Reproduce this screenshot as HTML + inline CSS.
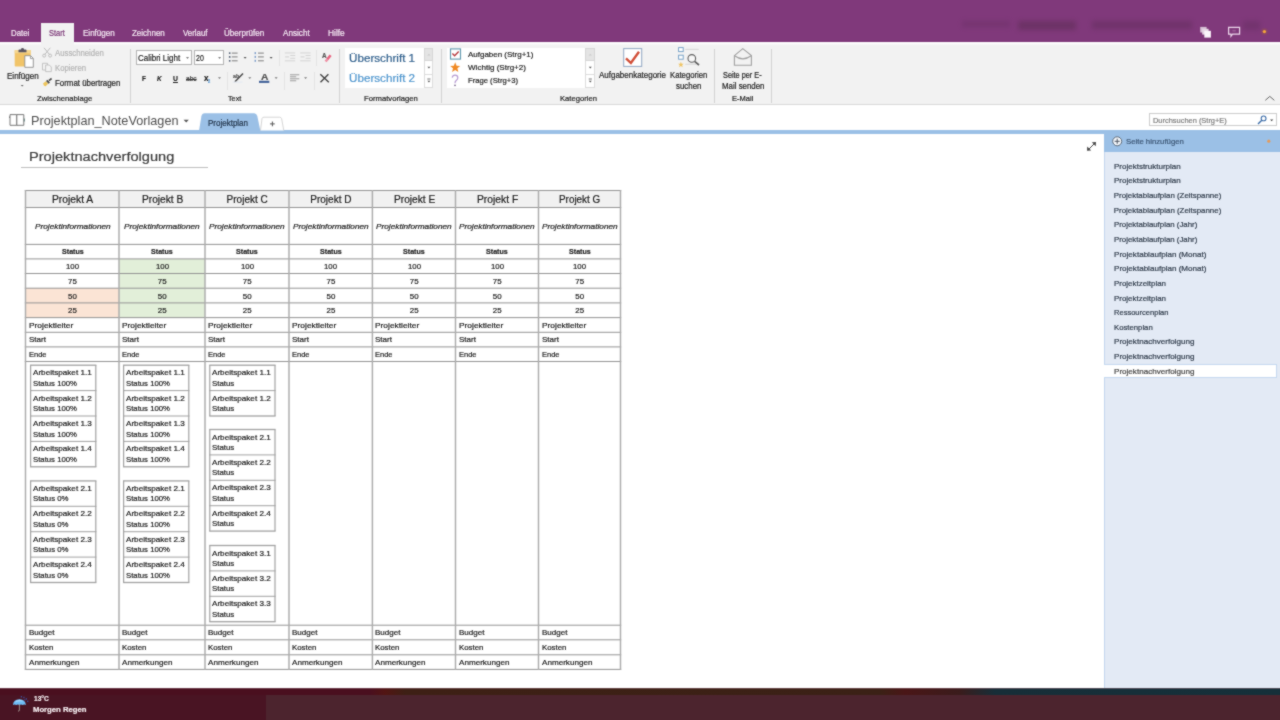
<!DOCTYPE html>
<html lang="de"><head><meta charset="utf-8"><title>OneNote - Projektnachverfolgung</title>
<style>
html,body{margin:0;padding:0;}
body{width:1280px;height:720px;overflow:hidden;position:relative;background:#fff;font-family:"Liberation Sans",sans-serif;}
.a{position:absolute;}
.t{-webkit-text-stroke:0.2px currentColor;position:absolute;white-space:nowrap;line-height:1;transform-origin:0 50%;font-family:"Liberation Sans",sans-serif;}
svg{position:absolute;overflow:visible;}
#pg{position:absolute;left:0;top:0;width:1280px;height:720px;overflow:hidden;will-change:transform;background:#fff;filter:url(#soft);}

</style></head>
<body>
<svg width="0" height="0" style="position:absolute"><defs><filter id="soft" x="0" y="0" width="100%" height="100%" color-interpolation-filters="sRGB"><feConvolveMatrix order="3" kernelMatrix="1 2 1 2 14 2 1 2 1" divisor="26" edgeMode="duplicate" preserveAlpha="true"/></filter></defs></svg>
<div id="pg">
<div class="a" style="left:0.00px;top:0.00px;width:1280.00px;height:42.00px;background:#80397B;"></div>
<div class="a" style="left:962.00px;top:21.00px;width:48.00px;height:6.00px;background:#6E3169;filter:blur(2.5px);opacity:.6;"></div>
<div class="a" style="left:1018.00px;top:21.00px;width:58.00px;height:9.00px;background:#66305F;filter:blur(2.5px);opacity:.75;"></div>
<div class="a" style="left:1092.00px;top:21.00px;width:100.00px;height:8.00px;background:#6A3064;filter:blur(2.5px);opacity:.7;"></div>
<div class="a" style="left:1243.00px;top:21.00px;width:17.00px;height:9.00px;background:#6E3169;filter:blur(2.5px);opacity:.7;"></div>
<div class="a" style="left:40.50px;top:22.50px;width:33.00px;height:20.50px;background:#F2F2F2;"></div>
<div class="a" style="left:0.00px;top:42.00px;width:1280.00px;height:62.50px;background:#F2F2F2;"></div>
<div class="a" style="left:0.00px;top:42.00px;width:1280.00px;height:3.20px;background:linear-gradient(180deg,#FCF9FC 0,#FCFBFC 65%,#F2F2F2 100%);"></div>
<div class="a" style="left:0.00px;top:104.00px;width:1280.00px;height:1.00px;background:#DADADA;"></div>
<div class="a" style="left:40.50px;top:41.00px;width:33.00px;height:4.00px;background:#F2F2F2;"></div>
<div class="a" style="left:130.30px;top:49.00px;width:1.20px;height:54.00px;background:#D2D2D2;"></div>
<div class="a" style="left:338.50px;top:49.00px;width:1.20px;height:54.00px;background:#D2D2D2;"></div>
<div class="a" style="left:440.80px;top:49.00px;width:1.20px;height:54.00px;background:#D2D2D2;"></div>
<div class="a" style="left:714.10px;top:49.00px;width:1.20px;height:54.00px;background:#D2D2D2;"></div>
<div class="a" style="left:770.50px;top:49.00px;width:1.20px;height:54.00px;background:#D2D2D2;"></div>
<div class="a" style="left:278.60px;top:50.00px;width:0.90px;height:16.00px;background:#E4E4E4;"></div>
<div class="a" style="left:315.60px;top:50.00px;width:0.90px;height:16.00px;background:#E4E4E4;"></div>
<div class="a" style="left:226.60px;top:71.50px;width:0.90px;height:18.00px;background:#E4E4E4;"></div>
<div class="a" style="left:283.60px;top:71.50px;width:0.90px;height:18.00px;background:#E4E4E4;"></div>
<div class="a" style="left:313.60px;top:71.50px;width:0.90px;height:18.00px;background:#E4E4E4;"></div>
<div class="a" style="left:136.30px;top:50.00px;width:55.90px;height:15.30px;background:#fff;box-sizing:border-box;border:1px solid #B4B4B4;"></div>
<div class="a" style="left:194.30px;top:50.00px;width:29.90px;height:15.30px;background:#fff;box-sizing:border-box;border:1px solid #B4B4B4;"></div>
<div class="a" style="left:345.30px;top:47.90px;width:88.10px;height:39.80px;background:#fff;"></div>
<div class="a" style="left:424.40px;top:47.90px;width:9.00px;height:39.80px;background:#fff;box-sizing:border-box;border:1px solid #DCDCDC;"></div>
<div class="a" style="left:424.40px;top:47.90px;width:9.00px;height:13.20px;background:#E4E4E4;box-sizing:border-box;border:1px solid #D6D6D6;"></div>
<div class="a" style="left:424.40px;top:73.70px;width:9.00px;height:1.00px;background:#DCDCDC;"></div>
<div class="a" style="left:447.40px;top:47.90px;width:148.00px;height:39.80px;background:#fff;"></div>
<div class="a" style="left:585.30px;top:47.90px;width:10.00px;height:39.80px;background:#fff;box-sizing:border-box;border:1px solid #DCDCDC;"></div>
<div class="a" style="left:585.30px;top:47.90px;width:10.00px;height:13.20px;background:#E4E4E4;box-sizing:border-box;border:1px solid #D6D6D6;"></div>
<div class="a" style="left:585.30px;top:73.70px;width:10.00px;height:1.00px;background:#DCDCDC;"></div>
<div class="a" style="left:0.00px;top:130.00px;width:1280.00px;height:3.80px;background:#9BC0E6;"></div>
<svg style="left:197px;top:112px" width="70" height="20" viewBox="0 0 70 20"><path d="M2 19 L4.4 4.2 Q5 1.3 7.6 1.3 L57 1.3 Q59.6 1.3 60.3 4 L63.4 19 Z" fill="#9BC0E6"/></svg>
<svg style="left:257px;top:115px" width="30" height="16" viewBox="0 0 30 16"><path d="M3.5 15.5 L5 3.6 Q5.3 2.2 7 2.2 L22.5 2.2 Q24.2 2.2 24.6 3.6 L26.8 15.5" fill="#fff" stroke="#D0D0D0" stroke-width="0.9"/><path d="M13 8.9 H17.8 M15.4 6.5 V11.3" stroke="#555" stroke-width="1" fill="none"/></svg>
<div class="a" style="left:1149.20px;top:113.30px;width:128.30px;height:13.00px;background:#fff;box-sizing:border-box;border:1px solid #CDCDCD;"></div>
<div class="a" style="left:21.00px;top:166.60px;width:187.00px;height:1.00px;background:#BEBEBE;"></div>
<div class="a" style="left:1104.00px;top:133.80px;width:176.00px;height:554.20px;background:#E3EAF5;"></div>
<div class="a" style="left:1104.00px;top:133.80px;width:1.00px;height:554.20px;background:#C3D6EE;"></div>
<div class="a" style="left:1104.00px;top:133.80px;width:176.00px;height:18.20px;background:#9BC0E6;"></div>
<div class="a" style="left:1104.20px;top:364.20px;width:173.00px;height:14.20px;background:#fff;box-sizing:border-box;border:1px solid #C5D9F0;border-left:none;"></div>
<div class="a" style="left:0.00px;top:688.00px;width:1280.00px;height:32.00px;background:#491423;"></div>
<div class="a" style="left:266.00px;top:694.50px;width:1014.00px;height:25.50px;background:#4C242E;"></div>
<div class="a" style="left:0.00px;top:688.00px;width:1280.00px;height:6.50px;border-top:1px solid rgba(150,110,125,.45);box-sizing:border-box;background:linear-gradient(90deg,#4A0F1F 0px,#4A0F1F 370px,#521513 385px,#3E2015 405px,#3B2116 880px,#4A1617 905px,#3A1C1C 960px,#172E38 995px,#15303A 1280px);"></div>
<div class="a" style="left:25.50px;top:190.50px;width:595.00px;height:17.00px;background:#F1F1F1;"></div>
<div class="a" style="left:25.50px;top:288.20px;width:93.50px;height:29.40px;background:#FBE4D5;"></div>
<div class="a" style="left:119.00px;top:258.90px;width:86.00px;height:58.70px;background:#E2EFD9;"></div>
<svg style="left:0;top:0" width="1280" height="720" viewBox="0 0 1280 720">
<rect x="24.80" y="190.00" width="596.40" height="1.00" fill="#949494"/>
<rect x="24.80" y="207.00" width="596.40" height="1.00" fill="#949494"/>
<rect x="24.80" y="243.90" width="596.40" height="1.00" fill="#949494"/>
<rect x="24.80" y="258.40" width="596.40" height="1.00" fill="#949494"/>
<rect x="24.80" y="273.00" width="596.40" height="1.00" fill="#949494"/>
<rect x="24.80" y="287.70" width="596.40" height="1.00" fill="#949494"/>
<rect x="24.80" y="302.40" width="596.40" height="1.00" fill="#949494"/>
<rect x="24.80" y="317.10" width="596.40" height="1.00" fill="#949494"/>
<rect x="24.80" y="331.80" width="596.40" height="1.00" fill="#949494"/>
<rect x="24.80" y="346.40" width="596.40" height="1.00" fill="#949494"/>
<rect x="24.80" y="361.00" width="596.40" height="1.00" fill="#949494"/>
<rect x="24.80" y="624.70" width="596.40" height="1.00" fill="#949494"/>
<rect x="24.80" y="639.30" width="596.40" height="1.00" fill="#949494"/>
<rect x="24.80" y="654.30" width="596.40" height="1.00" fill="#949494"/>
<rect x="24.80" y="668.90" width="596.40" height="1.00" fill="#949494"/>
<rect x="24.77" y="190.00" width="1.45" height="479.90" fill="#ABABAB"/>
<rect x="118.28" y="190.00" width="1.45" height="479.90" fill="#ABABAB"/>
<rect x="204.28" y="190.00" width="1.45" height="479.90" fill="#ABABAB"/>
<rect x="288.27" y="190.00" width="1.45" height="479.90" fill="#ABABAB"/>
<rect x="371.67" y="190.00" width="1.45" height="479.90" fill="#ABABAB"/>
<rect x="454.77" y="190.00" width="1.45" height="479.90" fill="#ABABAB"/>
<rect x="537.77" y="190.00" width="1.45" height="479.90" fill="#ABABAB"/>
<rect x="619.77" y="190.00" width="1.45" height="479.90" fill="#ABABAB"/>
<rect x="30.00" y="364.55" width="66.40" height="1.30" fill="#A2A2A2"/>
<rect x="30.00" y="390.10" width="66.40" height="1.00" fill="#A2A2A2"/>
<rect x="30.00" y="415.50" width="66.40" height="1.00" fill="#A2A2A2"/>
<rect x="30.00" y="440.90" width="66.40" height="1.00" fill="#A2A2A2"/>
<rect x="30.00" y="466.15" width="66.40" height="1.30" fill="#A2A2A2"/>
<rect x="30.00" y="365.20" width="1.20" height="101.60" fill="#A2A2A2"/>
<rect x="95.20" y="365.20" width="1.20" height="101.60" fill="#A2A2A2"/>
<rect x="30.00" y="480.25" width="66.40" height="1.30" fill="#A2A2A2"/>
<rect x="30.00" y="505.80" width="66.40" height="1.00" fill="#A2A2A2"/>
<rect x="30.00" y="531.20" width="66.40" height="1.00" fill="#A2A2A2"/>
<rect x="30.00" y="556.60" width="66.40" height="1.00" fill="#A2A2A2"/>
<rect x="30.00" y="581.85" width="66.40" height="1.30" fill="#A2A2A2"/>
<rect x="30.00" y="480.90" width="1.20" height="101.60" fill="#A2A2A2"/>
<rect x="95.20" y="480.90" width="1.20" height="101.60" fill="#A2A2A2"/>
<rect x="123.00" y="364.55" width="66.40" height="1.30" fill="#A2A2A2"/>
<rect x="123.00" y="390.10" width="66.40" height="1.00" fill="#A2A2A2"/>
<rect x="123.00" y="415.50" width="66.40" height="1.00" fill="#A2A2A2"/>
<rect x="123.00" y="440.90" width="66.40" height="1.00" fill="#A2A2A2"/>
<rect x="123.00" y="466.15" width="66.40" height="1.30" fill="#A2A2A2"/>
<rect x="123.00" y="365.20" width="1.20" height="101.60" fill="#A2A2A2"/>
<rect x="188.20" y="365.20" width="1.20" height="101.60" fill="#A2A2A2"/>
<rect x="123.00" y="480.25" width="66.40" height="1.30" fill="#A2A2A2"/>
<rect x="123.00" y="505.80" width="66.40" height="1.00" fill="#A2A2A2"/>
<rect x="123.00" y="531.20" width="66.40" height="1.00" fill="#A2A2A2"/>
<rect x="123.00" y="556.60" width="66.40" height="1.00" fill="#A2A2A2"/>
<rect x="123.00" y="581.85" width="66.40" height="1.30" fill="#A2A2A2"/>
<rect x="123.00" y="480.90" width="1.20" height="101.60" fill="#A2A2A2"/>
<rect x="188.20" y="480.90" width="1.20" height="101.60" fill="#A2A2A2"/>
<rect x="209.20" y="364.55" width="66.40" height="1.30" fill="#A2A2A2"/>
<rect x="209.20" y="390.10" width="66.40" height="1.00" fill="#A2A2A2"/>
<rect x="209.20" y="415.35" width="66.40" height="1.30" fill="#A2A2A2"/>
<rect x="209.20" y="365.20" width="1.20" height="50.80" fill="#A2A2A2"/>
<rect x="274.40" y="365.20" width="1.20" height="50.80" fill="#A2A2A2"/>
<rect x="209.20" y="428.85" width="66.40" height="1.30" fill="#A2A2A2"/>
<rect x="209.20" y="454.40" width="66.40" height="1.00" fill="#A2A2A2"/>
<rect x="209.20" y="479.80" width="66.40" height="1.00" fill="#A2A2A2"/>
<rect x="209.20" y="505.20" width="66.40" height="1.00" fill="#A2A2A2"/>
<rect x="209.20" y="530.45" width="66.40" height="1.30" fill="#A2A2A2"/>
<rect x="209.20" y="429.50" width="1.20" height="101.60" fill="#A2A2A2"/>
<rect x="274.40" y="429.50" width="1.20" height="101.60" fill="#A2A2A2"/>
<rect x="209.20" y="544.85" width="66.40" height="1.30" fill="#A2A2A2"/>
<rect x="209.20" y="570.40" width="66.40" height="1.00" fill="#A2A2A2"/>
<rect x="209.20" y="595.80" width="66.40" height="1.00" fill="#A2A2A2"/>
<rect x="209.20" y="621.05" width="66.40" height="1.30" fill="#A2A2A2"/>
<rect x="209.20" y="545.50" width="1.20" height="76.20" fill="#A2A2A2"/>
<rect x="274.40" y="545.50" width="1.20" height="76.20" fill="#A2A2A2"/>
</svg>
<svg style="left:0;top:0" width="1280" height="720" viewBox="0 0 1280 720">
<rect x="14.7" y="50" width="16" height="16.6" rx="0.8" fill="#F1C468"/>
<rect x="14.7" y="50" width="16" height="3.2" fill="#F4D58E"/>
<path d="M18.5 52.2 V50.2 Q18.5 49.4 19.4 49.4 H20.9 Q21.1 48.1 22.5 48.1 Q23.9 48.1 24.1 49.4 H25.6 Q26.5 49.4 26.5 50.2 V52.2 Z" fill="#5A5560"/>
<path d="M24.8 55.7 H30.6 L33.3 58.4 V67.3 H24.8 Z" fill="#fff" stroke="#8C8C8C" stroke-width="0.9"/>
<path d="M30.4 55.9 V58.6 H33.1" fill="none" stroke="#8C8C8C" stroke-width="0.8"/>
<path d="M20.70 85.00 L23.70 85.00 L22.20 86.60 Z" fill="#666"/>
<g stroke="#BDBDBD" stroke-width="1" fill="none"><path d="M44 47.8 L49.6 54.6 M50.3 47.8 L44.7 54.6"/><circle cx="44.2" cy="55.6" r="1.5"/><circle cx="50.1" cy="55.6" r="1.5"/></g>
<g stroke="#BDBDBD" stroke-width="0.9" fill="#F3F3F3"><path d="M42.5 63.3 H47.5 V70 H42.5 Z"/><path d="M45.6 65 H49.3 L51.3 67 V71.6 H45.6 Z"/></g>
<path d="M43 83.6 L45.8 81.2 L48.2 83.8 L45.6 86.2 Q43.8 86.6 43 83.6 Z" fill="#EEC55B"/>
<path d="M46 80.9 L47.4 79.7 L50 82.5 L48.6 83.7 Z" fill="#4A4A4A"/>
<path d="M48.9 80.6 L51.6 78.5" stroke="#4A4A4A" stroke-width="1.6" fill="none"/>
<path d="M186.00 57.20 L189.00 57.20 L187.50 58.80 Z" fill="#555"/>
<path d="M218.10 57.20 L221.10 57.20 L219.60 58.80 Z" fill="#555"/>
<circle cx="229.7" cy="53.1" r="0.9" fill="#46556B"/>
<rect x="231.8" y="52.60" width="5.8" height="1" fill="#7C7C7C"/>
<rect x="254.7" y="52.10" width="1" height="2" fill="#4A78B8"/>
<rect x="258" y="52.60" width="5.8" height="1" fill="#7C7C7C"/>
<circle cx="229.7" cy="56.9" r="0.9" fill="#46556B"/>
<rect x="231.8" y="56.40" width="5.8" height="1" fill="#7C7C7C"/>
<rect x="254.7" y="55.90" width="1" height="2" fill="#4A78B8"/>
<rect x="258" y="56.40" width="5.8" height="1" fill="#7C7C7C"/>
<circle cx="229.7" cy="60.8" r="0.9" fill="#46556B"/>
<rect x="231.8" y="60.30" width="5.8" height="1" fill="#7C7C7C"/>
<rect x="254.7" y="59.80" width="1" height="2" fill="#4A78B8"/>
<rect x="258" y="60.30" width="5.8" height="1" fill="#7C7C7C"/>
<path d="M243.55 56.95 L246.65 56.95 L245.10 58.65 Z" fill="#555"/>
<path d="M269.55 56.95 L272.65 56.95 L271.10 58.65 Z" fill="#555"/>
<g fill="#D0D0D0"><rect x="284.8" y="52.5" width="10.4" height="0.9"/><rect x="284.8" y="60.4" width="10.4" height="0.9"/><rect x="290.2" y="55.1" width="5" height="0.9"/><rect x="290.2" y="57.8" width="5" height="0.9"/><rect x="285.1" y="56.4" width="4" height="1"/></g>
<g fill="#D0D0D0"><rect x="300.2" y="52.5" width="10.4" height="0.9"/><rect x="300.2" y="60.4" width="10.4" height="0.9"/><rect x="305.6" y="55.1" width="5" height="0.9"/><rect x="305.6" y="57.8" width="5" height="0.9"/><rect x="300.5" y="56.4" width="4" height="1"/></g>
<path d="M326.2 58.7 L329.6 54.4 L331.6 56 L328.2 60.3 Z" fill="#E9627F"/><path d="M324.6 60.7 L326.2 58.7 L328.2 60.3 L326.6 62.3 Z" fill="#EE8FA4"/>
<path d="M218.00 77.30 L221.00 77.30 L219.50 78.90 Z" fill="#777"/>
<path d="M235.2 81.6 L243 73.6" stroke="#4A4A4A" stroke-width="1.5"/><path d="M234.4 82.2 L236.4 81.6 L235.2 80.4 Z" fill="#4A4A4A"/>
<rect x="232.6" y="81.6" width="10" height="1" fill="#E2E8F2"/>
<path d="M248.30 77.30 L251.30 77.30 L249.80 78.90 Z" fill="#777"/>
<rect x="259" y="80.8" width="10.3" height="2.1" fill="#3F5F97"/>
<path d="M274.60 77.30 L277.60 77.30 L276.10 78.90 Z" fill="#777"/>
<g fill="#A5A5A5"><rect x="290" y="74.2" width="9.3" height="1.1"/><rect x="290" y="76.2" width="6.2" height="1.1"/><rect x="290" y="78.2" width="9.3" height="1.1"/><rect x="290" y="80.2" width="6.2" height="1.1"/></g>
<path d="M304.10 77.30 L307.10 77.30 L305.60 78.90 Z" fill="#777"/>
<path d="M320.3 74.2 L328.8 82.2 M328.4 74.2 L320.5 82.2" stroke="#444" stroke-width="1.4" fill="none"/>
<path d="M427.30 55.6 L428.90 53.8 L430.50 55.6 Z" fill="#C9C9C9"/>
<path d="M427.40 66.80 L430.40 66.80 L428.90 68.40 Z" fill="#555"/>
<rect x="427.30" y="78.6" width="3.2" height="0.8" fill="#555"/>
<path d="M427.40 80.80 L430.40 80.80 L428.90 82.40 Z" fill="#555"/>
<path d="M588.70 55.6 L590.30 53.8 L591.90 55.6 Z" fill="#C9C9C9"/>
<path d="M588.80 66.80 L591.80 66.80 L590.30 68.40 Z" fill="#555"/>
<rect x="588.70" y="78.6" width="3.2" height="0.8" fill="#555"/>
<path d="M588.80 80.80 L591.80 80.80 L590.30 82.40 Z" fill="#555"/>
<rect x="450.5" y="48.9" width="10" height="10.2" fill="#fff" stroke="#5E97AD" stroke-width="1.1"/>
<path d="M452.4 53.6 L454.6 55.8 L458.7 51.5" fill="none" stroke="#B63A3F" stroke-width="1.4"/>
<polygon points="455.20,62.30 456.55,65.74 460.24,65.96 457.39,68.31 458.32,71.89 455.20,69.90 452.08,71.89 453.01,68.31 450.16,65.96 453.85,65.74" fill="#F08A24"/>
<path d="M452.2 77.6 Q452.6 75.2 455 75.2 Q457.8 75.2 457.8 77.7 Q457.8 79.3 456.2 80.4 Q455 81.3 455 83.2" fill="none" stroke="#B79BD3" stroke-width="1.2"/><circle cx="455" cy="85.4" r="0.8" fill="#6E5A86"/>
<rect x="623.7" y="48.6" width="18" height="17.8" fill="#fff" stroke="#8FA6C2" stroke-width="1"/>
<path d="M626 58.3 L630.9 63 L639 51.8" fill="none" stroke="#D14E37" stroke-width="2.4"/>
<g fill="#fff" stroke="#6C9BC4" stroke-width="0.9"><rect x="678.6" y="47.6" width="4.6" height="4"/><rect x="678.6" y="55.2" width="4.6" height="4"/></g>
<rect x="685.2" y="48.9" width="13.5" height="0.8" fill="#CFCFCF"/><rect x="685.2" y="63.8" width="11" height="0.8" fill="#CFCFCF"/>
<polygon points="680.90,61.70 681.66,63.65 683.75,63.77 682.14,65.10 682.66,67.13 680.90,66.00 679.14,67.13 679.66,65.10 678.05,63.77 680.14,63.65" fill="#EFC463"/>
<circle cx="691.8" cy="58.4" r="3.8" fill="#F7F7F7" stroke="#5E5E5E" stroke-width="1.1"/><path d="M694.6 61.3 L699 65" stroke="#5E5E5E" stroke-width="1.7"/>
<g fill="none" stroke="#A0A0A0" stroke-width="1.1"><path d="M734.4 55.6 L742.8 48.6 L751.4 55.6 V65.2 H734.4 Z"/><path d="M734.6 55.8 Q742.8 62 751.2 55.8"/></g>
<path d="M1265.3 100.3 L1269.8 96.4 L1274.3 100.3" fill="none" stroke="#666" stroke-width="1"/>
<g fill="#fff" stroke="#7A7A7A" stroke-width="1"><path d="M10 114.6 H16.8 V125.3 H10 Z"/><path d="M16.8 114.6 H23.8 V125.3 H16.8 Z"/></g><rect x="9" y="116.4" width="1" height="1.6" fill="#7A7A7A"/><rect x="23.8" y="118.5" width="1" height="3" fill="#5F7F7A"/>
<path d="M183.60 119.80 L188.80 119.80 L186.20 122.60 Z" fill="#555"/>
<circle cx="1263.6" cy="118.4" r="2.4" fill="none" stroke="#3D6DA8" stroke-width="1.1"/><path d="M1261.8 120.3 L1258 124" stroke="#3D6DA8" stroke-width="1.4"/>
<path d="M1270.10 119.55 L1273.30 119.55 L1271.70 121.25 Z" fill="#444"/>
<path d="M1088.4 149.6 L1094.8 143.2" stroke="#4A4A4A" stroke-width="1" fill="none"/><path d="M1096 142 L1095.8 146.2 L1091.8 142.2 Z" fill="#4A4A4A"/><path d="M1087 150.8 L1087.2 146.6 L1091.2 150.6 Z" fill="#4A4A4A"/>
<circle cx="1117.2" cy="141.3" r="4.5" fill="#F4F8FC" stroke="#505C6C" stroke-width="0.9"/><path d="M1114.6 141.3 H1119.8 M1117.2 138.7 V143.9" stroke="#3E4652" stroke-width="0.9"/>
<circle cx="1268.8" cy="141.2" r="1.6" fill="#E59A5A"/>
<rect x="1200.2" y="26.9" width="6.4" height="5.6" fill="#D6BFD4"/><rect x="1202.2" y="28.8" width="6.4" height="5.8" fill="#E6D6E5"/><rect x="1204.3" y="30.8" width="6.6" height="6.8" fill="#FBF6FB"/>
<path d="M1228.6 27.4 H1239.6 V34.2 H1232.6 L1231 36.2 V34.2 H1228.6 Z" fill="none" stroke="#EBD5EA" stroke-width="1.2"/><rect x="1232.4" y="29.8" width="3.4" height="1.8" fill="#9A5A95"/>
<circle cx="1264.4" cy="31.6" r="3.6" fill="#8E4A5E" opacity="0.6"/><circle cx="1264.4" cy="31.6" r="1.7" fill="#F4A43A"/>
<path d="M12.9 705 Q13.4 699.4 19.4 699.2 Q25.4 699.4 25.9 705 Q24.2 703.9 22.6 705 Q21 703.9 19.4 705 Q17.8 703.9 16.2 705 Q14.6 703.9 12.9 705 Z" fill="#6DBBF5"/>
<path d="M14.6 702.4 Q16 700 19.4 699.8 Q22 700 23.4 701.6 Q19.4 700.6 14.6 702.4 Z" fill="#A6DBFF"/>
<path d="M19.4 704.6 V710 Q19.4 711.3 18 711.1" fill="none" stroke="#9C8F8A" stroke-width="1"/>
<g fill="#3C55A8"><rect x="20.8" y="696" width="1.1" height="1.5"/><rect x="23.4" y="696.8" width="1.1" height="1.5"/><rect x="25.8" y="698.2" width="1.1" height="1.5"/><rect x="27.2" y="700.6" width="1.1" height="1.5"/><rect x="24.4" y="699.2" width="1" height="1.3"/></g>
</svg>
<span class="t" id="t0" style="left:10.50px;top:28.63px;font-size:8.30px;color:#F4E9F3;transform:scaleX(0.9394);">Datei</span>
<span class="t" id="t1" style="left:48.70px;top:28.63px;font-size:8.30px;color:#7A3575;transform:scaleX(0.9012);">Start</span>
<span class="t" id="t2" style="left:82.50px;top:28.63px;font-size:8.30px;color:#F4E9F3;transform:scaleX(0.9675);">Einfügen</span>
<span class="t" id="t3" style="left:131.70px;top:28.63px;font-size:8.30px;color:#F4E9F3;transform:scaleX(0.9607);">Zeichnen</span>
<span class="t" id="t4" style="left:182.50px;top:28.63px;font-size:8.30px;color:#F4E9F3;transform:scaleX(0.9480);">Verlauf</span>
<span class="t" id="t5" style="left:224.20px;top:28.63px;font-size:8.30px;color:#F4E9F3;transform:scaleX(0.9707);">Überprüfen</span>
<span class="t" id="t6" style="left:282.50px;top:28.63px;font-size:8.30px;color:#F4E9F3;transform:scaleX(0.9809);">Ansicht</span>
<span class="t" id="t7" style="left:327.50px;top:28.63px;font-size:8.30px;color:#F4E9F3;transform:scaleX(1.0055);">Hilfe</span>
<span class="t" id="t8" style="left:6.60px;top:71.73px;font-size:8.30px;color:#1F1F1F;transform:scaleX(0.9675);">Einfügen</span>
<span class="t" id="t9" style="left:54.70px;top:48.93px;font-size:8.30px;color:#B4B4B4;transform:scaleX(0.9362);">Ausschneiden</span>
<span class="t" id="t10" style="left:54.70px;top:63.83px;font-size:8.30px;color:#B4B4B4;transform:scaleX(0.9332);">Kopieren</span>
<span class="t" id="t11" style="left:54.70px;top:79.33px;font-size:8.30px;color:#1F1F1F;transform:scaleX(0.9503);">Format übertragen</span>
<span class="t" id="t12" style="left:37.00px;top:95.38px;font-size:7.90px;color:#1F1F1F;transform:scaleX(0.9696);">Zwischenablage</span>
<span class="t" id="t13" style="left:138.40px;top:53.93px;font-size:8.30px;color:#1F1F1F;transform:scaleX(0.9632);">Calibri Light</span>
<span class="t" id="t14" style="left:196.00px;top:53.93px;font-size:8.30px;color:#1F1F1F;transform:scaleX(0.8447);">20</span>
<span class="t" id="t15" style="left:141.70px;top:75.02px;font-size:8.00px;color:#1F1F1F;font-weight:700;transform:scaleX(0.7974);">F</span>
<span class="t" id="t16" style="left:157.00px;top:75.02px;font-size:8.00px;color:#1F1F1F;font-weight:700;font-style:italic;transform:scaleX(0.7957);">K</span>
<span class="t" id="t17" style="left:172.70px;top:74.52px;font-size:8.00px;color:#1F1F1F;font-weight:700;text-decoration:underline;transform:scaleX(0.8476);">U</span>
<span class="t" id="t18" style="left:186.00px;top:75.88px;font-size:6.80px;color:#3A3A3A;text-decoration:line-through;transform:scaleX(0.9664);">abc</span>
<span class="t" id="t19" style="left:203.50px;top:74.13px;font-size:8.30px;color:#1F1F1F;font-weight:700;transform:scaleX(0.9730);">x</span>
<span class="t" id="t20" style="left:208.40px;top:79.98px;font-size:4.60px;color:#5B9BD5;font-weight:700;transform:scaleX(0.8585);">2</span>
<span class="t" id="t21" style="left:228.00px;top:95.48px;font-size:7.90px;color:#1F1F1F;transform:scaleX(0.9182);">Text</span>
<span class="t" id="t22" style="left:349.30px;top:52.94px;font-size:10.80px;color:#2F5F8C;transform:scaleX(1.0800);">Überschrift 1</span>
<span class="t" id="t23" style="left:349.30px;top:72.94px;font-size:10.80px;color:#4F96CE;transform:scaleX(1.0800);">Überschrift 2</span>
<span class="t" id="t24" style="left:363.70px;top:95.48px;font-size:7.90px;color:#1F1F1F;transform:scaleX(0.9735);">Formatvorlagen</span>
<span class="t" id="t25" style="left:468.00px;top:50.62px;font-size:8.00px;color:#1F1F1F;transform:scaleX(0.9968);">Aufgaben (Strg+1)</span>
<span class="t" id="t26" style="left:468.00px;top:64.02px;font-size:8.00px;color:#1F1F1F;transform:scaleX(1.0073);">Wichtig (Strg+2)</span>
<span class="t" id="t27" style="left:468.00px;top:76.82px;font-size:8.00px;color:#1F1F1F;transform:scaleX(0.9569);">Frage (Strg+3)</span>
<span class="t" id="t28" style="left:559.50px;top:95.48px;font-size:7.90px;color:#1F1F1F;transform:scaleX(0.9667);">Kategorien</span>
<span class="t" id="t29" style="left:599.00px;top:71.43px;font-size:8.30px;color:#1F1F1F;transform:scaleX(0.9617);">Aufgabenkategorie</span>
<span class="t" id="t30" style="left:669.80px;top:71.43px;font-size:8.30px;color:#1F1F1F;transform:scaleX(0.9317);">Kategorien</span>
<span class="t" id="t31" style="left:676.00px;top:82.03px;font-size:8.30px;color:#1F1F1F;transform:scaleX(0.9490);">suchen</span>
<span class="t" id="t32" style="left:723.40px;top:71.43px;font-size:8.30px;color:#1F1F1F;transform:scaleX(0.8810);">Seite per E-</span>
<span class="t" id="t33" style="left:721.70px;top:82.03px;font-size:8.30px;color:#1F1F1F;transform:scaleX(0.9497);">Mail senden</span>
<span class="t" id="t34" style="left:732.00px;top:95.48px;font-size:7.90px;color:#1F1F1F;transform:scaleX(0.9526);">E-Mail</span>
<span class="t" id="t35" style="left:30.50px;top:114.82px;font-size:12.40px;color:#505050;-webkit-text-stroke:0;transform:scaleX(1.0245);">Projektplan_NoteVorlagen</span>
<span class="t" id="t36" style="left:208.00px;top:119.59px;font-size:8.20px;color:#22344A;transform:scaleX(0.9764);">Projektplan</span>
<span class="t" id="t37" style="left:1152.50px;top:117.18px;font-size:7.90px;color:#7A7A7A;transform:scaleX(0.9426);">Durchsuchen (Strg+E)</span>
<span class="t" id="t38" style="left:29.30px;top:149.79px;font-size:13.70px;color:#3A3A3A;transform:scaleX(1.0668);">Projektnachverfolgung</span>
<span class="t" id="t39" style="left:1126.30px;top:138.28px;font-size:7.90px;color:#3B5573;transform:scaleX(0.9847);">Seite hinzufügen</span>
<span class="t" id="t40" style="left:1113.80px;top:162.68px;font-size:7.90px;color:#2F3B4A;transform:scaleX(1.0137);">Projektstrukturplan</span>
<span class="t" id="t41" style="left:1113.80px;top:177.33px;font-size:7.90px;color:#2F3B4A;transform:scaleX(1.0137);">Projektstrukturplan</span>
<span class="t" id="t42" style="left:1113.80px;top:191.98px;font-size:7.90px;color:#2F3B4A;">Projektablaufplan (Zeitspanne)</span>
<span class="t" id="t43" style="left:1113.80px;top:206.63px;font-size:7.90px;color:#2F3B4A;">Projektablaufplan (Zeitspanne)</span>
<span class="t" id="t44" style="left:1113.80px;top:221.28px;font-size:7.90px;color:#2F3B4A;transform:scaleX(0.9943);">Projektablaufplan (Jahr)</span>
<span class="t" id="t45" style="left:1113.80px;top:235.93px;font-size:7.90px;color:#2F3B4A;transform:scaleX(0.9943);">Projektablaufplan (Jahr)</span>
<span class="t" id="t46" style="left:1113.80px;top:250.58px;font-size:7.90px;color:#2F3B4A;transform:scaleX(1.0237);">Projektablaufplan (Monat)</span>
<span class="t" id="t47" style="left:1113.80px;top:265.23px;font-size:7.90px;color:#2F3B4A;transform:scaleX(1.0237);">Projektablaufplan (Monat)</span>
<span class="t" id="t48" style="left:1113.80px;top:279.88px;font-size:7.90px;color:#2F3B4A;transform:scaleX(1.0045);">Projektzeitplan</span>
<span class="t" id="t49" style="left:1113.80px;top:294.53px;font-size:7.90px;color:#2F3B4A;transform:scaleX(1.0045);">Projektzeitplan</span>
<span class="t" id="t50" style="left:1113.80px;top:309.18px;font-size:7.90px;color:#2F3B4A;transform:scaleX(0.9556);">Ressourcenplan</span>
<span class="t" id="t51" style="left:1113.80px;top:323.83px;font-size:7.90px;color:#2F3B4A;transform:scaleX(0.9801);">Kostenplan</span>
<span class="t" id="t52" style="left:1113.80px;top:338.48px;font-size:7.90px;color:#2F3B4A;transform:scaleX(1.0238);">Projektnachverfolgung</span>
<span class="t" id="t53" style="left:1113.80px;top:353.13px;font-size:7.90px;color:#2F3B4A;transform:scaleX(1.0238);">Projektnachverfolgung</span>
<span class="t" id="t54" style="left:1113.80px;top:367.78px;font-size:7.90px;color:#444;transform:scaleX(1.0238);">Projektnachverfolgung</span>
<span class="t" id="t55" style="left:34.30px;top:695.23px;font-size:7.50px;color:#F6EEF1;font-weight:700;transform:scaleX(0.8828);">13°C</span>
<span class="t" id="t56" style="left:33.10px;top:706.00px;font-size:7.40px;color:#F6EEF1;font-weight:700;transform:scaleX(1.0423);">Morgen Regen</span>
<span class="t" id="t57" style="left:51.85px;top:194.75px;font-size:10.00px;color:#1C1C1C;transform:scaleX(1.0292);">Projekt A</span>
<span class="t" id="t58" style="left:34.60px;top:222.81px;font-size:7.70px;color:#1C1C1C;font-style:italic;transform:scaleX(1.0735);">Projektinformationen</span>
<span class="t" id="t59" style="left:61.55px;top:248.07px;font-size:7.60px;color:#1E1E1E;font-weight:700;transform:scaleX(0.9389);">Status</span>
<span class="t" id="t60" style="left:65.95px;top:263.38px;font-size:7.90px;color:#1C1C1C;transform:scaleX(0.9870);">100</span>
<span class="t" id="t61" style="left:68.05px;top:278.03px;font-size:7.90px;color:#1C1C1C;">75</span>
<span class="t" id="t62" style="left:68.05px;top:292.73px;font-size:7.90px;color:#1C1C1C;">50</span>
<span class="t" id="t63" style="left:68.05px;top:307.43px;font-size:7.90px;color:#1C1C1C;">25</span>
<span class="t" id="t64" style="left:28.50px;top:321.68px;font-size:7.90px;color:#1C1C1C;transform:scaleX(1.0607);">Projektleiter</span>
<span class="t" id="t65" style="left:28.50px;top:336.28px;font-size:7.90px;color:#1C1C1C;transform:scaleX(1.0197);">Start</span>
<span class="t" id="t66" style="left:28.50px;top:350.98px;font-size:7.90px;color:#1C1C1C;transform:scaleX(0.9492);">Ende</span>
<span class="t" id="t67" style="left:28.50px;top:629.48px;font-size:7.90px;color:#1C1C1C;transform:scaleX(1.0154);">Budget</span>
<span class="t" id="t68" style="left:28.50px;top:644.08px;font-size:7.90px;color:#1C1C1C;transform:scaleX(0.9968);">Kosten</span>
<span class="t" id="t69" style="left:28.50px;top:658.88px;font-size:7.90px;color:#1C1C1C;transform:scaleX(1.0256);">Anmerkungen</span>
<span class="t" id="t70" style="left:141.60px;top:194.75px;font-size:10.00px;color:#1C1C1C;transform:scaleX(1.0153);">Projekt B</span>
<span class="t" id="t71" style="left:124.35px;top:222.81px;font-size:7.70px;color:#1C1C1C;font-style:italic;transform:scaleX(1.0735);">Projektinformationen</span>
<span class="t" id="t72" style="left:151.30px;top:248.07px;font-size:7.60px;color:#1E1E1E;font-weight:700;transform:scaleX(0.9389);">Status</span>
<span class="t" id="t73" style="left:155.70px;top:263.38px;font-size:7.90px;color:#1C1C1C;transform:scaleX(0.9870);">100</span>
<span class="t" id="t74" style="left:157.80px;top:278.03px;font-size:7.90px;color:#1C1C1C;">75</span>
<span class="t" id="t75" style="left:157.80px;top:292.73px;font-size:7.90px;color:#1C1C1C;">50</span>
<span class="t" id="t76" style="left:157.80px;top:307.43px;font-size:7.90px;color:#1C1C1C;">25</span>
<span class="t" id="t77" style="left:122.00px;top:321.68px;font-size:7.90px;color:#1C1C1C;transform:scaleX(1.0607);">Projektleiter</span>
<span class="t" id="t78" style="left:122.00px;top:336.28px;font-size:7.90px;color:#1C1C1C;transform:scaleX(1.0197);">Start</span>
<span class="t" id="t79" style="left:122.00px;top:350.98px;font-size:7.90px;color:#1C1C1C;transform:scaleX(0.9492);">Ende</span>
<span class="t" id="t80" style="left:122.00px;top:629.48px;font-size:7.90px;color:#1C1C1C;transform:scaleX(1.0154);">Budget</span>
<span class="t" id="t81" style="left:122.00px;top:644.08px;font-size:7.90px;color:#1C1C1C;transform:scaleX(0.9968);">Kosten</span>
<span class="t" id="t82" style="left:122.00px;top:658.88px;font-size:7.90px;color:#1C1C1C;transform:scaleX(1.0256);">Anmerkungen</span>
<span class="t" id="t83" style="left:226.60px;top:194.75px;font-size:10.00px;color:#1C1C1C;">Projekt C</span>
<span class="t" id="t84" style="left:209.35px;top:222.81px;font-size:7.70px;color:#1C1C1C;font-style:italic;transform:scaleX(1.0735);">Projektinformationen</span>
<span class="t" id="t85" style="left:236.30px;top:248.07px;font-size:7.60px;color:#1E1E1E;font-weight:700;transform:scaleX(0.9389);">Status</span>
<span class="t" id="t86" style="left:240.70px;top:263.38px;font-size:7.90px;color:#1C1C1C;transform:scaleX(0.9870);">100</span>
<span class="t" id="t87" style="left:242.80px;top:278.03px;font-size:7.90px;color:#1C1C1C;">75</span>
<span class="t" id="t88" style="left:242.80px;top:292.73px;font-size:7.90px;color:#1C1C1C;">50</span>
<span class="t" id="t89" style="left:242.80px;top:307.43px;font-size:7.90px;color:#1C1C1C;">25</span>
<span class="t" id="t90" style="left:208.00px;top:321.68px;font-size:7.90px;color:#1C1C1C;transform:scaleX(1.0607);">Projektleiter</span>
<span class="t" id="t91" style="left:208.00px;top:336.28px;font-size:7.90px;color:#1C1C1C;transform:scaleX(1.0197);">Start</span>
<span class="t" id="t92" style="left:208.00px;top:350.98px;font-size:7.90px;color:#1C1C1C;transform:scaleX(0.9492);">Ende</span>
<span class="t" id="t93" style="left:208.00px;top:629.48px;font-size:7.90px;color:#1C1C1C;transform:scaleX(1.0154);">Budget</span>
<span class="t" id="t94" style="left:208.00px;top:644.08px;font-size:7.90px;color:#1C1C1C;transform:scaleX(0.9968);">Kosten</span>
<span class="t" id="t95" style="left:208.00px;top:658.88px;font-size:7.90px;color:#1C1C1C;transform:scaleX(1.0256);">Anmerkungen</span>
<span class="t" id="t96" style="left:310.30px;top:194.75px;font-size:10.00px;color:#1C1C1C;">Projekt D</span>
<span class="t" id="t97" style="left:293.05px;top:222.81px;font-size:7.70px;color:#1C1C1C;font-style:italic;transform:scaleX(1.0735);">Projektinformationen</span>
<span class="t" id="t98" style="left:320.00px;top:248.07px;font-size:7.60px;color:#1E1E1E;font-weight:700;transform:scaleX(0.9389);">Status</span>
<span class="t" id="t99" style="left:324.40px;top:263.38px;font-size:7.90px;color:#1C1C1C;transform:scaleX(0.9870);">100</span>
<span class="t" id="t100" style="left:326.50px;top:278.03px;font-size:7.90px;color:#1C1C1C;">75</span>
<span class="t" id="t101" style="left:326.50px;top:292.73px;font-size:7.90px;color:#1C1C1C;">50</span>
<span class="t" id="t102" style="left:326.50px;top:307.43px;font-size:7.90px;color:#1C1C1C;">25</span>
<span class="t" id="t103" style="left:292.00px;top:321.68px;font-size:7.90px;color:#1C1C1C;transform:scaleX(1.0607);">Projektleiter</span>
<span class="t" id="t104" style="left:292.00px;top:336.28px;font-size:7.90px;color:#1C1C1C;transform:scaleX(1.0197);">Start</span>
<span class="t" id="t105" style="left:292.00px;top:350.98px;font-size:7.90px;color:#1C1C1C;transform:scaleX(0.9492);">Ende</span>
<span class="t" id="t106" style="left:292.00px;top:629.48px;font-size:7.90px;color:#1C1C1C;transform:scaleX(1.0154);">Budget</span>
<span class="t" id="t107" style="left:292.00px;top:644.08px;font-size:7.90px;color:#1C1C1C;transform:scaleX(0.9968);">Kosten</span>
<span class="t" id="t108" style="left:292.00px;top:658.88px;font-size:7.90px;color:#1C1C1C;transform:scaleX(1.0256);">Anmerkungen</span>
<span class="t" id="t109" style="left:393.55px;top:194.75px;font-size:10.00px;color:#1C1C1C;transform:scaleX(1.0153);">Projekt E</span>
<span class="t" id="t110" style="left:376.30px;top:222.81px;font-size:7.70px;color:#1C1C1C;font-style:italic;transform:scaleX(1.0735);">Projektinformationen</span>
<span class="t" id="t111" style="left:403.25px;top:248.07px;font-size:7.60px;color:#1E1E1E;font-weight:700;transform:scaleX(0.9389);">Status</span>
<span class="t" id="t112" style="left:407.65px;top:263.38px;font-size:7.90px;color:#1C1C1C;transform:scaleX(0.9870);">100</span>
<span class="t" id="t113" style="left:409.75px;top:278.03px;font-size:7.90px;color:#1C1C1C;">75</span>
<span class="t" id="t114" style="left:409.75px;top:292.73px;font-size:7.90px;color:#1C1C1C;">50</span>
<span class="t" id="t115" style="left:409.75px;top:307.43px;font-size:7.90px;color:#1C1C1C;">25</span>
<span class="t" id="t116" style="left:375.40px;top:321.68px;font-size:7.90px;color:#1C1C1C;transform:scaleX(1.0607);">Projektleiter</span>
<span class="t" id="t117" style="left:375.40px;top:336.28px;font-size:7.90px;color:#1C1C1C;transform:scaleX(1.0197);">Start</span>
<span class="t" id="t118" style="left:375.40px;top:350.98px;font-size:7.90px;color:#1C1C1C;transform:scaleX(0.9492);">Ende</span>
<span class="t" id="t119" style="left:375.40px;top:629.48px;font-size:7.90px;color:#1C1C1C;transform:scaleX(1.0154);">Budget</span>
<span class="t" id="t120" style="left:375.40px;top:644.08px;font-size:7.90px;color:#1C1C1C;transform:scaleX(0.9968);">Kosten</span>
<span class="t" id="t121" style="left:375.40px;top:658.88px;font-size:7.90px;color:#1C1C1C;transform:scaleX(1.0256);">Anmerkungen</span>
<span class="t" id="t122" style="left:476.60px;top:194.75px;font-size:10.00px;color:#1C1C1C;transform:scaleX(1.0296);">Projekt F</span>
<span class="t" id="t123" style="left:459.35px;top:222.81px;font-size:7.70px;color:#1C1C1C;font-style:italic;transform:scaleX(1.0735);">Projektinformationen</span>
<span class="t" id="t124" style="left:486.30px;top:248.07px;font-size:7.60px;color:#1E1E1E;font-weight:700;transform:scaleX(0.9389);">Status</span>
<span class="t" id="t125" style="left:490.70px;top:263.38px;font-size:7.90px;color:#1C1C1C;transform:scaleX(0.9870);">100</span>
<span class="t" id="t126" style="left:492.80px;top:278.03px;font-size:7.90px;color:#1C1C1C;">75</span>
<span class="t" id="t127" style="left:492.80px;top:292.73px;font-size:7.90px;color:#1C1C1C;">50</span>
<span class="t" id="t128" style="left:492.80px;top:307.43px;font-size:7.90px;color:#1C1C1C;">25</span>
<span class="t" id="t129" style="left:458.50px;top:321.68px;font-size:7.90px;color:#1C1C1C;transform:scaleX(1.0607);">Projektleiter</span>
<span class="t" id="t130" style="left:458.50px;top:336.28px;font-size:7.90px;color:#1C1C1C;transform:scaleX(1.0197);">Start</span>
<span class="t" id="t131" style="left:458.50px;top:350.98px;font-size:7.90px;color:#1C1C1C;transform:scaleX(0.9492);">Ende</span>
<span class="t" id="t132" style="left:458.50px;top:629.48px;font-size:7.90px;color:#1C1C1C;transform:scaleX(1.0154);">Budget</span>
<span class="t" id="t133" style="left:458.50px;top:644.08px;font-size:7.90px;color:#1C1C1C;transform:scaleX(0.9968);">Kosten</span>
<span class="t" id="t134" style="left:458.50px;top:658.88px;font-size:7.90px;color:#1C1C1C;transform:scaleX(1.0256);">Anmerkungen</span>
<span class="t" id="t135" style="left:559.10px;top:194.75px;font-size:10.00px;color:#1C1C1C;transform:scaleX(0.9883);">Projekt G</span>
<span class="t" id="t136" style="left:541.85px;top:222.81px;font-size:7.70px;color:#1C1C1C;font-style:italic;transform:scaleX(1.0735);">Projektinformationen</span>
<span class="t" id="t137" style="left:568.80px;top:248.07px;font-size:7.60px;color:#1E1E1E;font-weight:700;transform:scaleX(0.9389);">Status</span>
<span class="t" id="t138" style="left:573.20px;top:263.38px;font-size:7.90px;color:#1C1C1C;transform:scaleX(0.9870);">100</span>
<span class="t" id="t139" style="left:575.30px;top:278.03px;font-size:7.90px;color:#1C1C1C;">75</span>
<span class="t" id="t140" style="left:575.30px;top:292.73px;font-size:7.90px;color:#1C1C1C;">50</span>
<span class="t" id="t141" style="left:575.30px;top:307.43px;font-size:7.90px;color:#1C1C1C;">25</span>
<span class="t" id="t142" style="left:541.50px;top:321.68px;font-size:7.90px;color:#1C1C1C;transform:scaleX(1.0607);">Projektleiter</span>
<span class="t" id="t143" style="left:541.50px;top:336.28px;font-size:7.90px;color:#1C1C1C;transform:scaleX(1.0197);">Start</span>
<span class="t" id="t144" style="left:541.50px;top:350.98px;font-size:7.90px;color:#1C1C1C;transform:scaleX(0.9492);">Ende</span>
<span class="t" id="t145" style="left:541.50px;top:629.48px;font-size:7.90px;color:#1C1C1C;transform:scaleX(1.0154);">Budget</span>
<span class="t" id="t146" style="left:541.50px;top:644.08px;font-size:7.90px;color:#1C1C1C;transform:scaleX(0.9968);">Kosten</span>
<span class="t" id="t147" style="left:541.50px;top:658.88px;font-size:7.90px;color:#1C1C1C;transform:scaleX(1.0256);">Anmerkungen</span>
<span class="t" id="t148" style="left:33.00px;top:369.20px;font-size:7.90px;color:#1C1C1C;transform:scaleX(1.0293);">Arbeitspaket 1.1</span>
<span class="t" id="t149" style="left:33.00px;top:379.70px;font-size:7.90px;color:#1C1C1C;transform:scaleX(0.9832);">Status 100%</span>
<span class="t" id="t150" style="left:33.00px;top:394.60px;font-size:7.90px;color:#1C1C1C;transform:scaleX(1.0293);">Arbeitspaket 1.2</span>
<span class="t" id="t151" style="left:33.00px;top:405.10px;font-size:7.90px;color:#1C1C1C;transform:scaleX(0.9832);">Status 100%</span>
<span class="t" id="t152" style="left:33.00px;top:420.00px;font-size:7.90px;color:#1C1C1C;transform:scaleX(1.0293);">Arbeitspaket 1.3</span>
<span class="t" id="t153" style="left:33.00px;top:430.50px;font-size:7.90px;color:#1C1C1C;transform:scaleX(0.9832);">Status 100%</span>
<span class="t" id="t154" style="left:33.00px;top:445.40px;font-size:7.90px;color:#1C1C1C;transform:scaleX(1.0293);">Arbeitspaket 1.4</span>
<span class="t" id="t155" style="left:33.00px;top:455.90px;font-size:7.90px;color:#1C1C1C;transform:scaleX(0.9832);">Status 100%</span>
<span class="t" id="t156" style="left:33.00px;top:484.90px;font-size:7.90px;color:#1C1C1C;transform:scaleX(1.0293);">Arbeitspaket 2.1</span>
<span class="t" id="t157" style="left:33.00px;top:495.40px;font-size:7.90px;color:#1C1C1C;transform:scaleX(0.9870);">Status 0%</span>
<span class="t" id="t158" style="left:33.00px;top:510.30px;font-size:7.90px;color:#1C1C1C;transform:scaleX(1.0293);">Arbeitspaket 2.2</span>
<span class="t" id="t159" style="left:33.00px;top:520.80px;font-size:7.90px;color:#1C1C1C;transform:scaleX(0.9870);">Status 0%</span>
<span class="t" id="t160" style="left:33.00px;top:535.70px;font-size:7.90px;color:#1C1C1C;transform:scaleX(1.0293);">Arbeitspaket 2.3</span>
<span class="t" id="t161" style="left:33.00px;top:546.20px;font-size:7.90px;color:#1C1C1C;transform:scaleX(0.9870);">Status 0%</span>
<span class="t" id="t162" style="left:33.00px;top:561.10px;font-size:7.90px;color:#1C1C1C;transform:scaleX(1.0293);">Arbeitspaket 2.4</span>
<span class="t" id="t163" style="left:33.00px;top:571.60px;font-size:7.90px;color:#1C1C1C;transform:scaleX(0.9870);">Status 0%</span>
<span class="t" id="t164" style="left:126.00px;top:369.20px;font-size:7.90px;color:#1C1C1C;transform:scaleX(1.0293);">Arbeitspaket 1.1</span>
<span class="t" id="t165" style="left:126.00px;top:379.70px;font-size:7.90px;color:#1C1C1C;transform:scaleX(0.9832);">Status 100%</span>
<span class="t" id="t166" style="left:126.00px;top:394.60px;font-size:7.90px;color:#1C1C1C;transform:scaleX(1.0293);">Arbeitspaket 1.2</span>
<span class="t" id="t167" style="left:126.00px;top:405.10px;font-size:7.90px;color:#1C1C1C;transform:scaleX(0.9832);">Status 100%</span>
<span class="t" id="t168" style="left:126.00px;top:420.00px;font-size:7.90px;color:#1C1C1C;transform:scaleX(1.0293);">Arbeitspaket 1.3</span>
<span class="t" id="t169" style="left:126.00px;top:430.50px;font-size:7.90px;color:#1C1C1C;transform:scaleX(0.9832);">Status 100%</span>
<span class="t" id="t170" style="left:126.00px;top:445.40px;font-size:7.90px;color:#1C1C1C;transform:scaleX(1.0293);">Arbeitspaket 1.4</span>
<span class="t" id="t171" style="left:126.00px;top:455.90px;font-size:7.90px;color:#1C1C1C;transform:scaleX(0.9832);">Status 100%</span>
<span class="t" id="t172" style="left:126.00px;top:484.90px;font-size:7.90px;color:#1C1C1C;transform:scaleX(1.0293);">Arbeitspaket 2.1</span>
<span class="t" id="t173" style="left:126.00px;top:495.40px;font-size:7.90px;color:#1C1C1C;transform:scaleX(0.9832);">Status 100%</span>
<span class="t" id="t174" style="left:126.00px;top:510.30px;font-size:7.90px;color:#1C1C1C;transform:scaleX(1.0293);">Arbeitspaket 2.2</span>
<span class="t" id="t175" style="left:126.00px;top:520.80px;font-size:7.90px;color:#1C1C1C;transform:scaleX(0.9832);">Status 100%</span>
<span class="t" id="t176" style="left:126.00px;top:535.70px;font-size:7.90px;color:#1C1C1C;transform:scaleX(1.0293);">Arbeitspaket 2.3</span>
<span class="t" id="t177" style="left:126.00px;top:546.20px;font-size:7.90px;color:#1C1C1C;transform:scaleX(0.9832);">Status 100%</span>
<span class="t" id="t178" style="left:126.00px;top:561.10px;font-size:7.90px;color:#1C1C1C;transform:scaleX(1.0293);">Arbeitspaket 2.4</span>
<span class="t" id="t179" style="left:126.00px;top:571.60px;font-size:7.90px;color:#1C1C1C;transform:scaleX(0.9832);">Status 100%</span>
<span class="t" id="t180" style="left:212.20px;top:369.20px;font-size:7.90px;color:#1C1C1C;transform:scaleX(1.0293);">Arbeitspaket 1.1</span>
<span class="t" id="t181" style="left:212.20px;top:379.70px;font-size:7.90px;color:#1C1C1C;transform:scaleX(0.9966);">Status</span>
<span class="t" id="t182" style="left:212.20px;top:394.60px;font-size:7.90px;color:#1C1C1C;transform:scaleX(1.0293);">Arbeitspaket 1.2</span>
<span class="t" id="t183" style="left:212.20px;top:405.10px;font-size:7.90px;color:#1C1C1C;transform:scaleX(0.9966);">Status</span>
<span class="t" id="t184" style="left:212.20px;top:433.50px;font-size:7.90px;color:#1C1C1C;transform:scaleX(1.0293);">Arbeitspaket 2.1</span>
<span class="t" id="t185" style="left:212.20px;top:444.00px;font-size:7.90px;color:#1C1C1C;transform:scaleX(0.9966);">Status</span>
<span class="t" id="t186" style="left:212.20px;top:458.90px;font-size:7.90px;color:#1C1C1C;transform:scaleX(1.0293);">Arbeitspaket 2.2</span>
<span class="t" id="t187" style="left:212.20px;top:469.40px;font-size:7.90px;color:#1C1C1C;transform:scaleX(0.9966);">Status</span>
<span class="t" id="t188" style="left:212.20px;top:484.30px;font-size:7.90px;color:#1C1C1C;transform:scaleX(1.0293);">Arbeitspaket 2.3</span>
<span class="t" id="t189" style="left:212.20px;top:494.80px;font-size:7.90px;color:#1C1C1C;transform:scaleX(0.9966);">Status</span>
<span class="t" id="t190" style="left:212.20px;top:509.70px;font-size:7.90px;color:#1C1C1C;transform:scaleX(1.0293);">Arbeitspaket 2.4</span>
<span class="t" id="t191" style="left:212.20px;top:520.20px;font-size:7.90px;color:#1C1C1C;transform:scaleX(0.9966);">Status</span>
<span class="t" id="t192" style="left:212.20px;top:549.50px;font-size:7.90px;color:#1C1C1C;transform:scaleX(1.0293);">Arbeitspaket 3.1</span>
<span class="t" id="t193" style="left:212.20px;top:560.00px;font-size:7.90px;color:#1C1C1C;transform:scaleX(0.9966);">Status</span>
<span class="t" id="t194" style="left:212.20px;top:574.90px;font-size:7.90px;color:#1C1C1C;transform:scaleX(1.0293);">Arbeitspaket 3.2</span>
<span class="t" id="t195" style="left:212.20px;top:585.40px;font-size:7.90px;color:#1C1C1C;transform:scaleX(0.9966);">Status</span>
<span class="t" id="t196" style="left:212.20px;top:600.30px;font-size:7.90px;color:#1C1C1C;transform:scaleX(1.0293);">Arbeitspaket 3.3</span>
<span class="t" id="t197" style="left:212.20px;top:610.80px;font-size:7.90px;color:#1C1C1C;transform:scaleX(0.9966);">Status</span>
<span class="t" id="t198" style="left:322.40px;top:52.15px;font-size:7.00px;color:#555;font-weight:700;transform:scaleX(0.9086);">A</span>
<span class="t" id="t199" style="left:232.80px;top:73.39px;font-size:6.00px;color:#555;font-weight:700;transform:scaleX(0.8837);">ab</span>
<span class="t" id="t200" style="left:260.50px;top:73.13px;font-size:8.60px;color:#505050;font-weight:700;transform:scaleX(1.1899);">A</span>
</div>
</body></html>
